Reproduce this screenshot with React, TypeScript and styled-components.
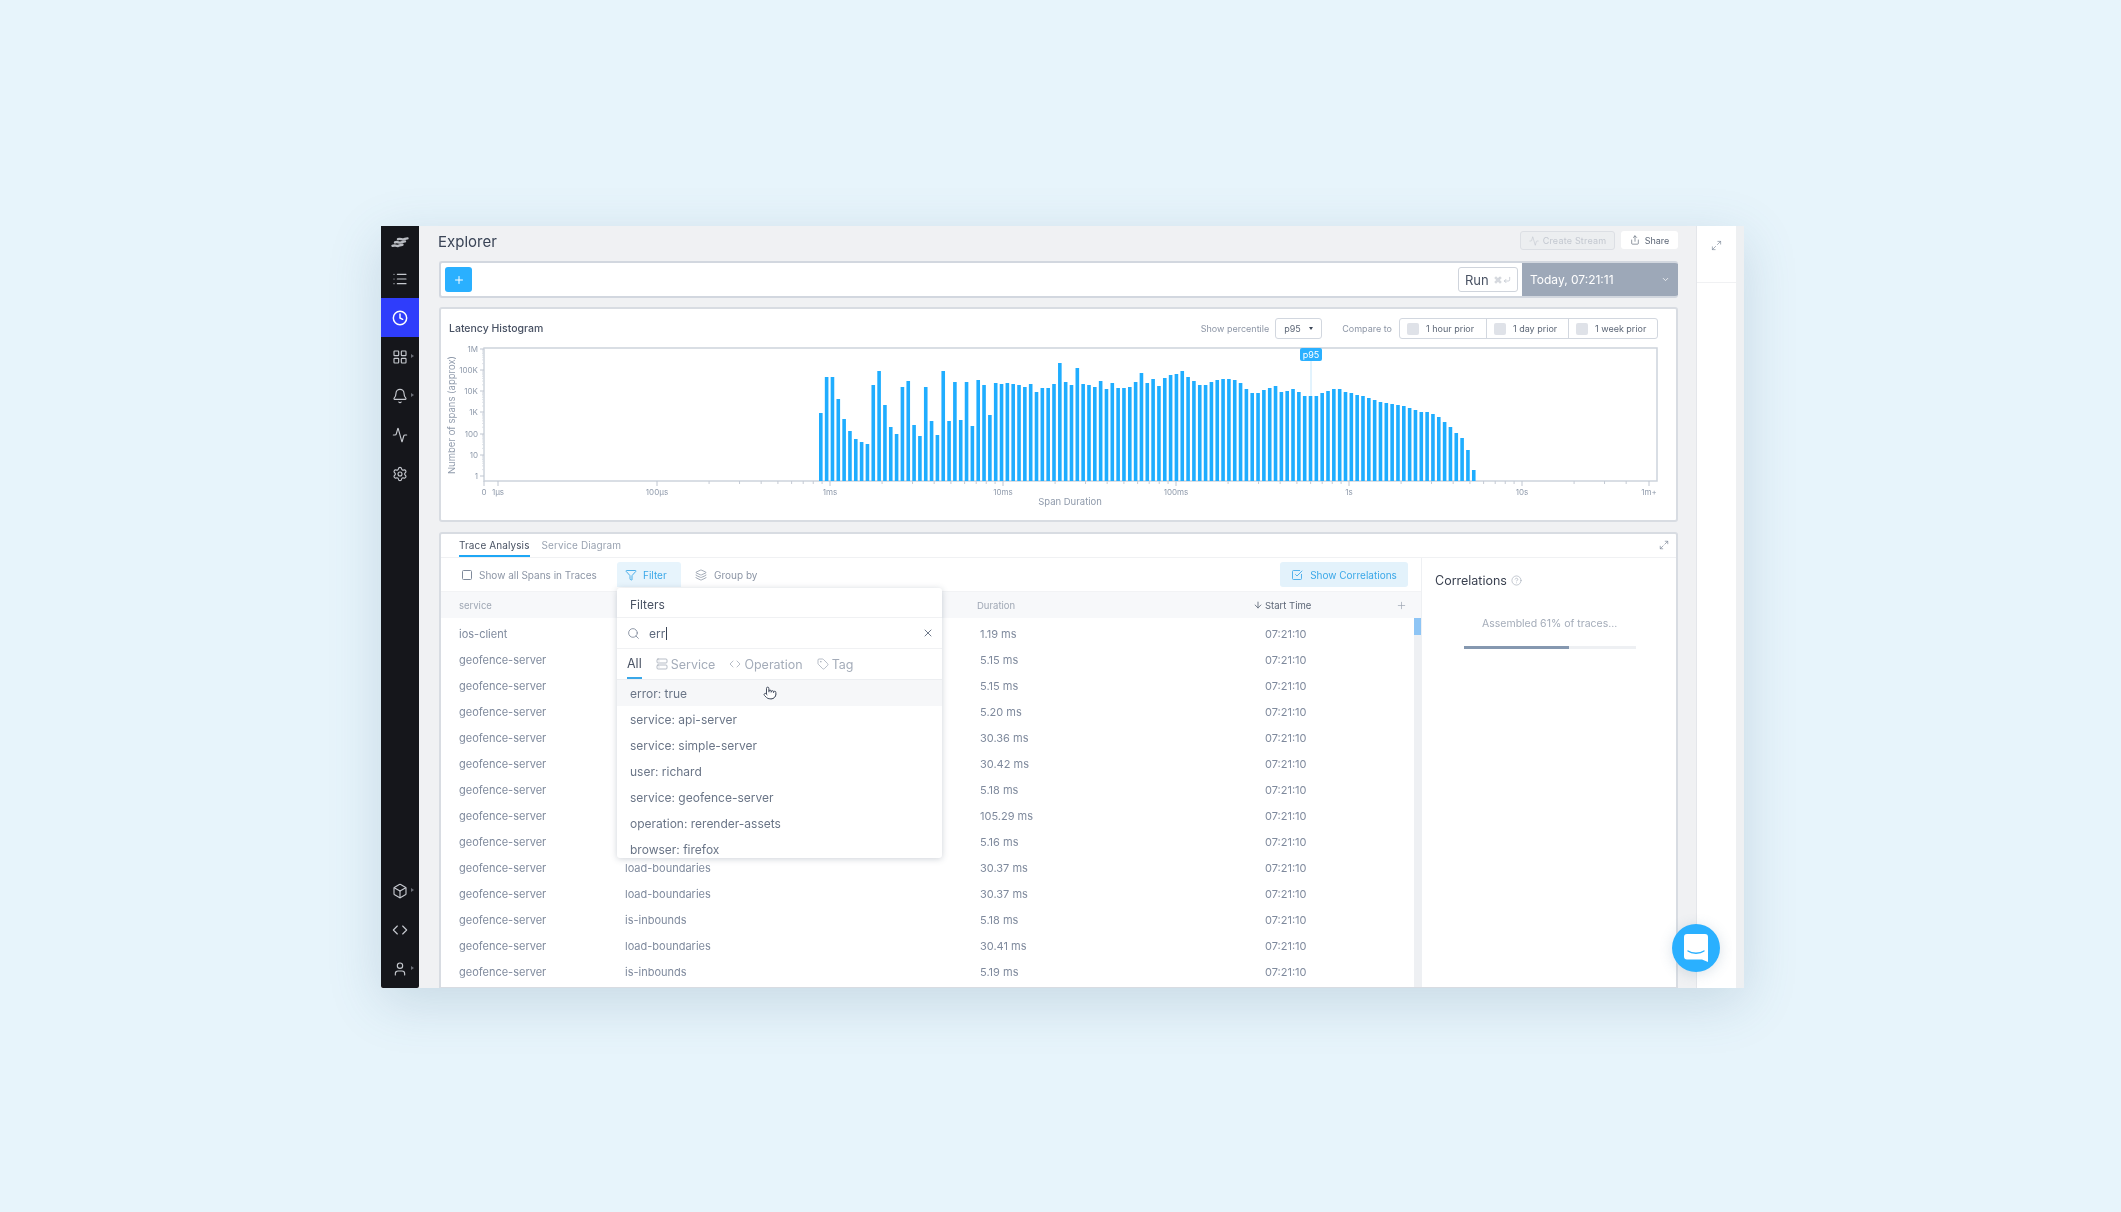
import styled, { createGlobalStyle } from "styled-components";
import {
  Activity,
  ArrowDown,
  Bell,
  Box,
  ChevronDown,
  CircleHelp,
  Clock,
  Code,
  Command,
  CornerDownLeft,
  Filter,
  Layers,
  LayoutGrid,
  List,
  Maximize2,
  Plus,
  Pointer,
  Search,
  Server,
  Settings,
  Share,
  SquareCheckBig,
  Tag,
  User,
  X,
} from "lucide-react";

const FONT = `Inter, "Liberation Sans", sans-serif`;

const GlobalStyle = createGlobalStyle`
  html, body { margin: 0; padding: 0; background: #e7f4fb; }
  body { font-family: ${FONT}; }
  * { box-sizing: border-box; }
`;

const BAR_HEIGHTS = [
  68, 104, 104, 82, 62, 50, 42, 39, 37, 96, 110, 76, 54, 47, 94, 100, 56, 45, 94, 60, 46, 110, 60, 99, 61, 99, 55, 101,
  96, 66, 98, 97, 98, 97, 96, 94, 97, 89, 93, 93, 97, 118, 99, 96, 113, 97, 96, 94, 100, 92, 98, 93, 93, 94, 99, 108,
  98, 102, 95, 103, 106, 107, 110, 104, 100, 96, 96, 99, 101, 102, 102, 101, 98, 92, 88, 88, 91, 93, 95, 89, 90, 92, 89,
  85, 85, 85, 88, 90, 92, 92, 89, 88, 86, 85, 83, 81, 79, 78, 77, 76, 75, 73, 71, 69, 69, 67, 64, 59, 54, 48, 43, 31, 11,
];

const Y_TICKS = [
  { label: "1M", y: 349 },
  { label: "100K", y: 370 },
  { label: "10K", y: 391 },
  { label: "1K", y: 412 },
  { label: "100", y: 434 },
  { label: "10", y: 455 },
  { label: "1", y: 476 },
];

const X_LABELS = [
  { label: "0", x: 485 },
  { label: "1µs", x: 499 },
  { label: "100µs", x: 658 },
  { label: "1ms", x: 831 },
  { label: "10ms", x: 1004 },
  { label: "100ms", x: 1177 },
  { label: "1s", x: 1350 },
  { label: "10s", x: 1523 },
  { label: "1m+", x: 1650 },
];

const PLOT = { left: 485, right: 1658, top: 348, bottom: 481 };
const DECADE = 173;

const ROWS = [
  ["ios-client", "api-request", "1.19 ms"],
  ["geofence-server", "is-inbounds", "5.15 ms"],
  ["geofence-server", "is-inbounds", "5.15 ms"],
  ["geofence-server", "is-inbounds", "5.20 ms"],
  ["geofence-server", "load-boundaries", "30.36 ms"],
  ["geofence-server", "load-boundaries", "30.42 ms"],
  ["geofence-server", "is-inbounds", "5.18 ms"],
  ["geofence-server", "load-boundaries", "105.29 ms"],
  ["geofence-server", "is-inbounds", "5.16 ms"],
  ["geofence-server", "load-boundaries", "30.37 ms"],
  ["geofence-server", "load-boundaries", "30.37 ms"],
  ["geofence-server", "is-inbounds", "5.18 ms"],
  ["geofence-server", "load-boundaries", "30.41 ms"],
  ["geofence-server", "is-inbounds", "5.19 ms"],
];

const FILTER_ITEMS = [
  "error: true",
  "service: api-server",
  "service: simple-server",
  "user: richard",
  "service: geofence-server",
  "operation: rerender-assets",
  "browser: firefox",
];

const Logo = () => (
  <svg width="18" height="12" viewBox="0 0 18 12" fill="none" stroke="#b9bcc2" strokeWidth="2.4" strokeLinecap="round">
    <path d="M7 2.200c2.500-1.200 3.500.6 5.500.2 1.500-.3 2.500-1.100 4-1" />
    <path d="M4 5.400c2.500-1.200 3.500.6 5.500.2 1.500-.3 2.500-1.100 4.500-1.200" />
    <path d="M1.500 8.800c2.500-1.200 3.500.6 5.500.2 1.500-.3 2.500-1.100 4.500-1.200" />
  </svg>
);

const Histogram = () => {
  const minorX: number[] = [];
  for (let base = 658; base < 1560; base += DECADE) {
    for (let k = 2; k < 10; k++) minorX.push(base + DECADE * Math.log10(k));
  }
  const minorY: number[] = [];
  for (let d = 0; d < 6; d++) {
    for (let k = 2; k < 10; k++) minorY.push(476 - d * 21.2 - 21.2 * Math.log10(k));
  }

  return (
    <ChartSvg viewBox="441 341 1236 175" width="1236" height="175">
      <rect
        x={PLOT.left}
        y={PLOT.top}
        width={PLOT.right - PLOT.left}
        height={PLOT.bottom - PLOT.top}
        fill="#fff"
        stroke="#cdd3dc"
        strokeWidth="1.5"
      />
      {minorY.map((y) => (
        <line key={y} x1={PLOT.left - 2} x2={PLOT.left} y1={y} y2={y} stroke="#d5dae2" strokeWidth="0.8" />
      ))}
      {Y_TICKS.map((t) => (
        <g key={t.label}>
          <line x1={PLOT.left - 4} x2={PLOT.left} y1={t.y} y2={t.y} stroke="#bfc6d1" />
          <text x={PLOT.left - 6} y={t.y + 3} textAnchor="end">
            {t.label}
          </text>
        </g>
      ))}
      {minorX
        .filter((x) => x < 1640)
        .map((x) => (
          <line key={x} x1={x} x2={x} y1={PLOT.bottom} y2={PLOT.bottom + 3} stroke="#c4cad4" />
        ))}
      {X_LABELS.map((t) => (
        <g key={t.label}>
          <line x1={t.x} x2={t.x} y1={PLOT.bottom} y2={PLOT.bottom + 5} stroke="#bfc6d1" />
          <text x={t.x} y={495} textAnchor="middle">
            {t.label}
          </text>
        </g>
      ))}
      {BAR_HEIGHTS.map((h, i) => (
        <rect key={i} x={820 + i * 5.83} y={PLOT.bottom - h} width="3.6" height={h} fill="#1fadff" />
      ))}
      <line x1="1312" x2="1312" y1="360" y2="396" stroke="#c4e6fb" strokeWidth="1" />
      <rect x="1301" y="348" width="22" height="13" rx="2" fill="#2ab0ff" />
      <MarkerText x="1312" y="358" textAnchor="middle">
        p95
      </MarkerText>
      <AxisTitle x="1071" y="505" textAnchor="middle">
        Span Duration
      </AxisTitle>
      <AxisTitle x="0" y="0" textAnchor="middle" transform="translate(456 415) rotate(-90)">
        Number of spans (approx)
      </AxisTitle>
    </ChartSvg>
  );
};

const NAV_TOP = [
  { icon: List, key: "list" },
  { icon: Clock, key: "clock", active: true },
  { icon: LayoutGrid, key: "grid", more: true },
  { icon: Bell, key: "bell", more: true },
  { icon: Activity, key: "activity" },
  { icon: Settings, key: "settings" },
];

const NAV_BOTTOM = [
  { icon: Box, key: "box", more: true },
  { icon: Code, key: "code" },
  { icon: User, key: "user", more: true },
];

const NavButton = ({ item }: { item: { icon: typeof List; active?: boolean; more?: boolean } }) => {
  const Icon = item.icon;
  return (
    <NavItem $active={item.active}>
      <Icon size={16} strokeWidth={item.active ? 2.2 : 1.7} />
      {item.more && <NavCaret />}
    </NavItem>
  );
};

export default function App() {
  return (
    <Page>
      <GlobalStyle />
      <Window>
        <Sidebar>
          <LogoBox>
            <Logo />
          </LogoBox>
          {NAV_TOP.map((item) => (
            <NavButton key={item.key} item={item} />
          ))}
          <NavSpacer />
          {NAV_BOTTOM.map((item) => (
            <NavButton key={item.key} item={item} />
          ))}
        </Sidebar>

        <Main>
          <TitleRow>
            <Title>Explorer</Title>
            <TitleActions>
              <CreateStream>
                <Activity size={10} strokeWidth={1.5} />
                Create Stream
              </CreateStream>
              <ShareButton>
                <Share size={10} strokeWidth={1.6} />
                Share
              </ShareButton>
            </TitleActions>
          </TitleRow>

          <QueryBar>
            <AddButton>
              <Plus size={12} strokeWidth={2} />
            </AddButton>
            <QuerySpacer />
            <RunButton>
              Run
              <RunKeys>
                <Command size={8} strokeWidth={2} />
                <CornerDownLeft size={8} strokeWidth={2} />
              </RunKeys>
            </RunButton>
            <DateBox>
              Today, 07:21:11
              <ChevronDown size={9} strokeWidth={2} />
            </DateBox>
          </QueryBar>

          <HistogramCard>
            <HistogramHeader>
              <CardTitle>Latency Histogram</CardTitle>
              <HistogramControls>
                <ControlLabel>Show percentile</ControlLabel>
                <PercentileSelect>
                  p95
                  <SelectCaret />
                </PercentileSelect>
                <CompareLabel>Compare to</CompareLabel>
                <CompareGroup>
                  <CompareItem $width={86}>
                    <CompareBox />1 hour prior
                  </CompareItem>
                  <CompareItem $width={82}>
                    <CompareBox />1 day prior
                  </CompareItem>
                  <CompareItem $width={89}>
                    <CompareBox />1 week prior
                  </CompareItem>
                </CompareGroup>
              </HistogramControls>
            </HistogramHeader>
            <Histogram />
          </HistogramCard>

          <TraceCard>
            <TabsRow>
              <TabLink $active>Trace Analysis</TabLink>
              <TabLink>Service Diagram</TabLink>
              <TabExpand>
                <Maximize2 size={10} strokeWidth={1.7} />
              </TabExpand>
            </TabsRow>
            <TraceBody>
              <TableColumn>
                <Toolbar>
                  <SpansToggle>
                    <SpansCheck />
                    Show all Spans in Traces
                  </SpansToggle>
                  <FilterButton>
                    <Filter size={12} strokeWidth={1.8} />
                    Filter
                  </FilterButton>
                  <GroupButton>
                    <Layers size={12} strokeWidth={1.6} />
                    Group by
                  </GroupButton>
                  <CorrelationsButton>
                    <SquareCheckBig size={12} strokeWidth={1.7} />
                    Show Correlations
                  </CorrelationsButton>
                </Toolbar>
                <TableHead>
                  <span>service</span>
                  <span>operation</span>
                  <span>Duration</span>
                  <StartTimeHead>
                    <ArrowDown size={10} strokeWidth={2} />
                    Start Time
                  </StartTimeHead>
                  <AddColumn>
                    <Plus size={11} strokeWidth={1.5} />
                  </AddColumn>
                </TableHead>
                <TableScroller>
                  <TableRows>
                    {ROWS.map((row, i) => (
                      <TableRow key={i}>
                        <span>{row[0]}</span>
                        <span>{row[1]}</span>
                        <span>{row[2]}</span>
                        <span>07:21:10</span>
                      </TableRow>
                    ))}
                  </TableRows>
                  <ScrollTrack>
                    <ScrollThumb />
                  </ScrollTrack>
                </TableScroller>

                <FilterMenu>
                  <FilterTitle>Filters</FilterTitle>
                  <FilterSearch>
                    <Search size={13} strokeWidth={1.6} />
                    <SearchText>err</SearchText>
                    <SearchClear>
                      <X size={12} strokeWidth={1.8} />
                    </SearchClear>
                  </FilterSearch>
                  <FilterTabs>
                    <FilterTab $active>All</FilterTab>
                    <FilterTab>
                      <Server size={12} strokeWidth={1.6} />
                      Service
                    </FilterTab>
                    <FilterTab>
                      <Code size={12} strokeWidth={1.6} />
                      Operation
                    </FilterTab>
                    <FilterTab>
                      <Tag size={12} strokeWidth={1.6} />
                      Tag
                    </FilterTab>
                  </FilterTabs>
                  <FilterList>
                    {FILTER_ITEMS.map((item, i) => (
                      <FilterItem key={item} $hover={i === 0}>
                        {item}
                      </FilterItem>
                    ))}
                  </FilterList>
                  <CursorHand>
                    <Pointer size={14} strokeWidth={1.6} fill="#fff" />
                  </CursorHand>
                </FilterMenu>
              </TableColumn>

              <CorrelationsColumn>
                <CorrelationsTitle>
                  Correlations
                  <CircleHelp size={11} strokeWidth={1.4} />
                </CorrelationsTitle>
                <AssembleText>Assembled 61% of traces...</AssembleText>
                <ProgressTrack>
                  <ProgressFill style={{ width: "61%" }} />
                </ProgressTrack>
              </CorrelationsColumn>
            </TraceBody>
          </TraceCard>
        </Main>

        <SidePanel>
          <SidePanelHead>
            <Maximize2 size={11} strokeWidth={1.5} />
          </SidePanelHead>
        </SidePanel>
        <WindowEdge />

        <ChatButton>
          <svg width="24" height="28" viewBox="0 0 24 28">
            <path d="M3 0h18a3 3 0 0 1 3 3v25l-6-2.500H3a3 3 0 0 1-3-3V3a3 3 0 0 1 3-3z" fill="#fff" />
            <path d="M4 17c4 3 12 3 16 0" fill="none" stroke="#2ab0ff" strokeWidth="1.3" strokeLinecap="round" />
          </svg>
        </ChatButton>
      </Window>
    </Page>
  );
}

const Page = styled.div`
  min-height: 1212px;
  padding: 226px 0 0 381px;
  background: #e7f4fb;
`;

const Window = styled.div`
  position: relative;
  display: flex;
  width: 1363px;
  height: 762px;
  background: #fff;
  box-shadow: 0 14px 50px rgba(70, 110, 140, 0.2);
  filter: blur(0.35px);
`;

const Sidebar = styled.nav`
  flex: 0 0 38px;
  display: flex;
  flex-direction: column;
  background: #15161b;
  border-radius: 0 0 2px 2px;
`;

const LogoBox = styled.div`
  height: 33px;
  display: flex;
  align-items: center;
  justify-content: center;
`;

const NavItem = styled.div<{ $active?: boolean }>`
  position: relative;
  height: 39px;
  display: flex;
  align-items: center;
  justify-content: center;
  color: ${(p) => (p.$active ? "#fff" : "#c6c9cf")};
  background: ${(p) => (p.$active ? "#2f3dfb" : "transparent")};
`;

const NavCaret = styled.span`
  position: absolute;
  left: 30px;
  top: 17px;
  border-left: 3px solid #6a6e76;
  border-top: 2.5px solid transparent;
  border-bottom: 2.5px solid transparent;
`;

const NavSpacer = styled.div`
  flex: 1;
`;

const Main = styled.main`
  flex: 0 0 1277px;
  display: flex;
  flex-direction: column;
  padding: 0 18px 0 20px;
  background: #f0f1f3;
  color: #4a5364;
  font-size: 10px;
`;

const TitleRow = styled.div`
  height: 35px;
  display: flex;
  align-items: flex-start;
  justify-content: space-between;
`;

const Title = styled.h1`
  margin: 6px 0 0 -1px;
  font-size: 15px;
  line-height: 19px;
  font-weight: 400;
  color: #3a4456;
`;

const TitleActions = styled.div`
  display: flex;
  gap: 6px;
  margin-top: 5px;
`;

const CreateStream = styled.div`
  width: 95px;
  height: 19px;
  display: flex;
  align-items: center;
  justify-content: center;
  gap: 4px;
  border: 1.5px solid #dcdfe4;
  border-radius: 3px;
  background: #eceef0;
  color: #c3c8d0;
  font-size: 9px;
  letter-spacing: 0.2px;
`;

const ShareButton = styled.div`
  width: 57px;
  height: 18px;
  display: flex;
  align-items: center;
  justify-content: center;
  gap: 5px;
  border-radius: 3px;
  background: #fff;
  color: #5c6676;
  font-size: 9px;
`;

const QueryBar = styled.div`
  height: 37px;
  flex: none;
  display: flex;
  align-items: center;
  padding-left: 4px;
  background: #fff;
  border: 2px solid #d2d7df;
  border-right: none;
  border-radius: 3px;
  overflow: hidden;
`;

const AddButton = styled.div`
  width: 27px;
  height: 25px;
  display: flex;
  align-items: center;
  justify-content: center;
  border-radius: 3px;
  background: #2ab0ff;
  color: #fff;
`;

const QuerySpacer = styled.div`
  flex: 1;
`;

const RunButton = styled.div`
  width: 60px;
  height: 25px;
  margin-right: 4px;
  display: flex;
  align-items: center;
  gap: 5px;
  padding-left: 6px;
  border: 1.5px solid #cfd4dc;
  border-radius: 3px;
  color: #4a5364;
  font-size: 13px;
`;

const RunKeys = styled.span`
  display: flex;
  gap: 1px;
  color: #b5bbc5;
`;

const DateBox = styled.div`
  width: 156px;
  height: 37px;
  display: flex;
  align-items: center;
  justify-content: space-between;
  padding: 0 8px;
  background: #9da8b8;
  color: #fff;
  font-size: 12px;
`;

const HistogramCard = styled.section`
  height: 215px;
  flex: none;
  margin-top: 9px;
  padding-top: 9px;
  background: #fff;
  border: 2px solid #d8dce2;
  border-radius: 3px;
`;

const HistogramHeader = styled.div`
  height: 21px;
  display: flex;
  align-items: center;
  justify-content: space-between;
  padding: 0 18px 0 8px;
`;

const CardTitle = styled.h2`
  margin: 0;
  font-size: 10.500px;
  font-weight: 500;
  color: #485163;
`;

const HistogramControls = styled.div`
  display: flex;
  align-items: center;
  color: #8c95a5;
  font-size: 9px;
`;

const ControlLabel = styled.span`
  margin-right: 6px;
`;

const PercentileSelect = styled.div`
  width: 47px;
  height: 21px;
  display: flex;
  align-items: center;
  justify-content: space-between;
  padding: 0 8px;
  border: 1.5px solid #d2d7df;
  border-radius: 3px;
  color: #5c6676;
`;

const SelectCaret = styled.span`
  border-top: 3px solid #3a4456;
  border-left: 2.5px solid transparent;
  border-right: 2.5px solid transparent;
`;

const CompareLabel = styled.span`
  margin: 0 7px 0 20px;
`;

const CompareGroup = styled.div`
  display: flex;
  height: 21px;
  border: 1.5px solid #d2d7df;
  border-radius: 3px;
  color: #5c6676;
`;

const CompareItem = styled.div<{ $width: number }>`
  width: ${(p) => p.$width}px;
  display: flex;
  align-items: center;
  padding-left: 7px;
  gap: 7px;
  & + & {
    border-left: 1.5px solid #d2d7df;
  }
`;

const CompareBox = styled.span`
  width: 12px;
  height: 12px;
  border-radius: 2px;
  background: #dfe2e8;
`;

const ChartSvg = styled.svg`
  display: block;
  margin: 2px 0 0 -1px;
  font-family: ${FONT};
  font-size: 8px;
  fill: #8f9aab;
`;

const MarkerText = styled.text`
  fill: #fff;
  font-size: 9px;
`;

const AxisTitle = styled.text`
  font-size: 9.500px;
  fill: #8f9aab;
`;

const TraceCard = styled.section`
  flex: 1;
  min-height: 0;
  margin-top: 10px;
  display: flex;
  flex-direction: column;
  background: #fff;
  border: 2px solid #d8dce2;
  border-bottom-width: 1px;
  border-radius: 3px 3px 0 0;
`;

const TabsRow = styled.div`
  position: relative;
  height: 24px;
  flex: none;
  display: flex;
  gap: 12px;
  padding-left: 18px;
  border-bottom: 1.5px solid #f0f1f3;
`;

const TabLink = styled.div<{ $active?: boolean }>`
  padding-top: 5px;
  font-size: 10px;
  letter-spacing: 0.1px;
  color: ${(p) => (p.$active ? "#4a5364" : "#9aa3b1")};
  border-bottom: ${(p) => (p.$active ? "2.5px solid #1ea7f5" : "none")};
`;

const TabExpand = styled.span`
  position: absolute;
  right: 7px;
  top: 6px;
  color: #7f8a9b;
`;

const TraceBody = styled.div`
  flex: 1;
  min-height: 0;
  display: flex;
`;

const TableColumn = styled.div`
  position: relative;
  flex: 0 0 981px;
  display: flex;
  flex-direction: column;
  border-right: 1.5px solid #eef0f3;
  overflow: hidden;
`;

const Toolbar = styled.div`
  height: 33px;
  flex: none;
  display: flex;
  align-items: center;
  padding: 0 13px 0 21px;
  color: #8c95a5;
  font-size: 10px;
`;

const SpansToggle = styled.div`
  width: 155px;
  display: flex;
  align-items: center;
  gap: 7px;
`;

const SpansCheck = styled.span`
  width: 10px;
  height: 10px;
  border: 1.5px solid #7f8a9b;
  border-radius: 1.5px;
`;

const FilterButton = styled.div`
  width: 64px;
  height: 25px;
  display: flex;
  align-items: center;
  gap: 6px;
  padding-left: 8px;
  border-radius: 3px 3px 0 0;
  background: #e7f4fc;
  color: #3aa7e8;
`;

const GroupButton = styled.div`
  display: flex;
  align-items: center;
  gap: 7px;
  margin-left: 14px;
`;

const CorrelationsButton = styled.div`
  width: 128px;
  height: 25px;
  margin-left: auto;
  display: flex;
  align-items: center;
  justify-content: center;
  gap: 7px;
  border-radius: 3px;
  background: #e3f2fb;
  color: #3aa7e8;
`;

const TableHead = styled.div`
  height: 27px;
  flex: none;
  display: grid;
  grid-template-columns: 166px 352px 288px 136px 1fr;
  align-items: center;
  padding-left: 18px;
  background: #f7f8fa;
  color: #a0a8b5;
  font-size: 9.500px;
  border-top: 1.5px solid #f2f3f5;
`;

const StartTimeHead = styled.span`
  display: flex;
  align-items: center;
  gap: 2px;
  margin-left: -12px;
  color: #5c6676;
`;

const AddColumn = styled.span`
  display: flex;
  margin-left: -5px;
  color: #9aa3b1;
`;

const TableScroller = styled.div`
  flex: 1;
  min-height: 0;
  display: flex;
`;

const TableRows = styled.div`
  flex: 1;
  padding-top: 3px;
`;

const TableRow = styled.div`
  height: 26px;
  display: grid;
  grid-template-columns: 166px 355px 285px 1fr;
  align-items: center;
  padding-left: 18px;
  color: #7f8a9d;
  font-size: 11px;
`;

const ScrollTrack = styled.div`
  width: 7px;
  background: #eef0f3;
`;

const ScrollThumb = styled.div`
  height: 17px;
  background: #8ec5f5;
`;

const FilterMenu = styled.div`
  position: absolute;
  left: 176px;
  top: 30px;
  width: 325px;
  height: 270px;
  display: flex;
  flex-direction: column;
  background: #fff;
  border-radius: 3px;
  box-shadow: 0 1px 6px rgba(60, 75, 100, 0.25);
  overflow: hidden;
`;

const FilterTitle = styled.div`
  height: 30px;
  flex: none;
  display: flex;
  align-items: center;
  padding: 3px 0 0 13px;
  font-size: 12px;
  color: #4a5364;
  border-bottom: 1.5px solid #f0f1f3;
`;

const FilterSearch = styled.div`
  height: 31px;
  flex: none;
  display: flex;
  align-items: center;
  gap: 9px;
  padding: 0 8px 0 10px;
  color: #7f8a9b;
  border-bottom: 1.5px solid #f0f1f3;
`;

const SearchText = styled.span`
  flex: 1;
  font-size: 12px;
  color: #5e6a7d;
  &::after {
    content: "";
    display: inline-block;
    width: 1px;
    height: 13px;
    margin-left: 1px;
    vertical-align: -2px;
    background: #3a4456;
  }
`;

const SearchClear = styled.span`
  display: flex;
  color: #5e6a7d;
`;

const FilterTabs = styled.div`
  height: 31px;
  flex: none;
  display: flex;
  gap: 14px;
  padding-left: 10px;
  border-bottom: 1.5px solid #eceef1;
`;

const FilterTab = styled.div<{ $active?: boolean }>`
  display: flex;
  align-items: center;
  gap: 3px;
  height: 30px;
  font-size: 12.500px;
  color: ${(p) => (p.$active ? "#4a5364" : "#a4acb9")};
  border-bottom: ${(p) => (p.$active ? "2.5px solid #3aa7e8" : "none")};
`;

const FilterList = styled.div`
  flex: 1;
  min-height: 0;
  overflow: hidden;
`;

const FilterItem = styled.div<{ $hover?: boolean }>`
  height: 26px;
  display: flex;
  align-items: center;
  padding-left: 13px;
  font-size: 12px;
  color: #6a7587;
  background: ${(p) => (p.$hover ? "#f6f7f9" : "transparent")};
`;

const CursorHand = styled.span`
  position: absolute;
  left: 146px;
  top: 98px;
  display: flex;
  color: #3a4456;
`;

const CorrelationsColumn = styled.aside`
  flex: 1;
  padding: 15px 0 0 13px;
`;

const CorrelationsTitle = styled.div`
  display: flex;
  align-items: center;
  gap: 4px;
  font-size: 12.500px;
  color: #3a4150;
  svg {
    color: #a4acb9;
  }
`;

const AssembleText = styled.div`
  margin: 29px 0 0 47px;
  font-size: 10.500px;
  color: #a4acb9;
`;

const ProgressTrack = styled.div`
  width: 172px;
  height: 3px;
  margin: 16px 0 0 29px;
  background: #eef0f3;
`;

const ProgressFill = styled.div`
  height: 100%;
  background: #8598b0;
`;

const SidePanel = styled.aside`
  flex: 0 0 40px;
  background: #fff;
  border-left: 1.5px solid #e4e6ea;
`;

const SidePanelHead = styled.div`
  height: 57px;
  display: flex;
  align-items: center;
  justify-content: center;
  padding-bottom: 17px;
  color: #7f8a9b;
  border-bottom: 1.5px solid #f0f1f3;
`;

const WindowEdge = styled.div`
  flex: 1;
  background: #eef0f2;
`;

const ChatButton = styled.div`
  position: absolute;
  left: 1291px;
  top: 698px;
  width: 48px;
  height: 48px;
  display: flex;
  align-items: center;
  justify-content: center;
  border-radius: 50%;
  background: #2ab0ff;
  box-shadow: 0 2px 14px rgba(70, 110, 140, 0.2);
`;
